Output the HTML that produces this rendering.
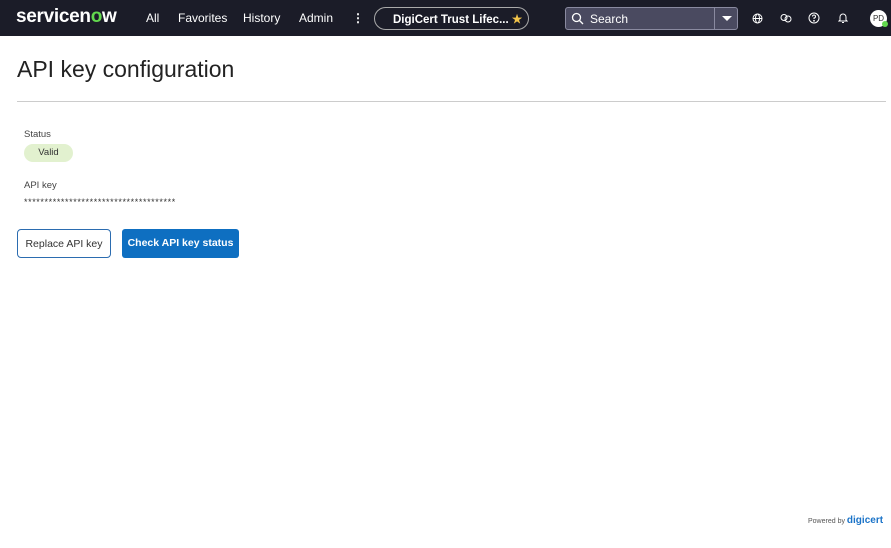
<!DOCTYPE html>
<html><head><meta charset="utf-8"><style>
*{box-sizing:border-box;margin:0;padding:0}
body{width:891px;height:548px;background:#fff;font-family:"Liberation Sans",sans-serif;position:relative;overflow:hidden}
.hd{position:absolute;left:0;top:0;width:891px;height:36px;background:#1b1c28;color:#fff}
.hd .t{position:absolute;top:11px;font-size:12px}
.logo{position:absolute;left:16px;top:6px;font-size:19px;font-weight:bold;letter-spacing:-0.3px}
.pill{position:absolute;left:374px;top:7px;width:155px;height:23px;border:1px solid #aaa;border-radius:12px;font-size:11.5px;font-weight:bold;padding:4px 0 0 18px}
.srch{position:absolute;left:565px;top:7px;width:173px;height:23px;background:#4a4a60;border:1px solid #8a8aa0;border-radius:3px}
h1{position:absolute;left:17px;top:56px;font-size:23px;font-weight:normal;color:#222}
.hr{position:absolute;left:17px;top:101px;width:869px;height:1px;background:#ccc}
.lbl{position:absolute;left:24px;font-size:9.5px;color:#444}
.badge{position:absolute;left:24px;top:144px;width:49px;height:18px;background:#e2f1cf;border-radius:9px;font-size:9.5px;color:#333;text-align:center;line-height:18px}
.btn{position:absolute;top:229px;height:29px;border-radius:3px;font-size:10.5px;text-align:center;line-height:28px}
svg{position:absolute}
</style></head><body>
<div class="hd">
<div class="logo">servicen<span style="color:#62d84e">o</span>w</div>
<div class="t" style="left:146px">All</div>
<div class="t" style="left:178px">Favorites</div>
<div class="t" style="left:243px">History</div>
<div class="t" style="left:299px">Admin</div>
<div class="t" style="left:352px;font-weight:bold">⋮</div>
<div class="pill">DigiCert Trust Lifec... <span style="color:#f3c44a">★</span></div>
<div class="srch">
<svg style="left:5px;top:4px" width="13" height="13" viewBox="0 0 13 13"><circle cx="5.5" cy="5.5" r="4" stroke="#fff" stroke-width="1.3" fill="none"/><path d="M8.5 8.5L12 12" stroke="#fff" stroke-width="1.3"/></svg>
<span style="position:absolute;left:24px;top:4px;font-size:12px">Search</span><div style="position:absolute;left:148px;top:0;width:1px;height:21px;background:#8a8aa0"></div><div style="position:absolute;left:156px;top:8px;border-left:5px solid transparent;border-right:5px solid transparent;border-top:5px solid #fff"></div></div>
<svg style="left:752px;top:13px" width="11" height="11" viewBox="0 0 11 11" fill="none" stroke="#fff" stroke-width="1"><circle cx="5.5" cy="5.5" r="4.5"/><ellipse cx="5.5" cy="5.5" rx="2" ry="4.5"/><path d="M1 5.5h9"/></svg>
<svg style="left:780px;top:13px" width="12" height="11" viewBox="0 0 12 11" fill="none" stroke="#fff" stroke-width="1"><circle cx="4" cy="4.5" r="3"/><circle cx="8" cy="6" r="3"/></svg>
<svg style="left:808px;top:12px" width="12" height="12" viewBox="0 0 12 12" fill="none" stroke="#fff" stroke-width="1"><circle cx="6" cy="6" r="5"/><path d="M4.5 4.5a1.5 1.5 0 1 1 1.5 1.5v1"/><circle cx="6" cy="8.8" r=".4" fill="#fff"/></svg>
<svg style="left:838px;top:12px" width="10" height="12" viewBox="0 0 10 12" fill="none" stroke="#fff" stroke-width="1"><path d="M2 8V5a3 3 0 0 1 6 0v3l1 1H1z"/><path d="M4 10.5h2"/></svg>
<div style="position:absolute;left:870px;top:10px;width:17px;height:17px;border-radius:50%;background:#fff;color:#333;font-size:8px;line-height:17px;text-align:center">PD</div>
<div style="position:absolute;left:882px;top:21px;width:6px;height:6px;border-radius:50%;background:#62d84e"></div>
</div>
<h1>API key configuration</h1>
<div class="hr"></div>
<div class="lbl" style="top:129px">Status</div>
<div class="badge">Valid</div>
<div class="lbl" style="top:197px;font-size:9px;letter-spacing:0.6px;color:#333">*************************************</div>
<div class="lbl" style="top:180px">API key</div>
<div class="btn" style="left:17px;width:94px;border:1px solid #2b6cb0;color:#333;border-radius:4px">Replace API key</div>
<div class="btn" style="left:122px;width:117px;background:#0e6fc1;color:#fff;font-weight:bold;line-height:29px">Check API key status</div>
<div style="position:absolute;left:808px;top:515px;font-size:7px;color:#555">Powered by <span style="font-size:10px;color:#1a73c8;font-weight:bold">digicert</span></div>
</body></html>
